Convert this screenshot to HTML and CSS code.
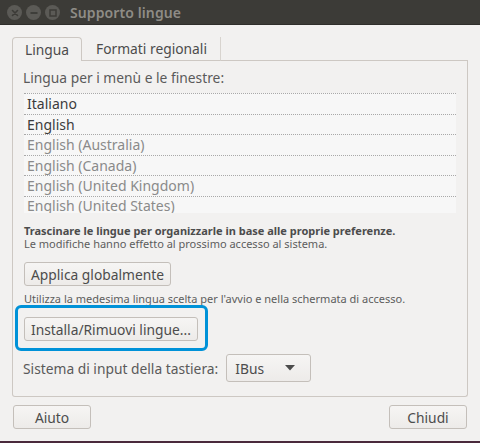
FILE: index.html
```html
<!DOCTYPE html>
<html lang="it">
<head>
<meta charset="utf-8">
<title>Supporto lingue</title>
<link rel="stylesheet" href="styles.css">
</head>
<body>
<div class="window">
  <header class="titlebar">
    <div class="wm-buttons">
      <span class="wm-btn">
        <svg viewBox="0 0 14 14" width="14" height="14"><path d="M4.5 4.5 L9.5 9.5 M9.5 4.5 L4.5 9.5" stroke="#3c3b37" stroke-width="1.6" stroke-linecap="round"/></svg>
      </span>
      <span class="wm-btn">
        <svg viewBox="0 0 14 14" width="14" height="14"><path d="M3.5 7 H10.5" stroke="#3c3b37" stroke-width="1.8"/></svg>
      </span>
      <span class="wm-btn">
        <svg viewBox="0 0 14 14" width="14" height="14"><rect x="4" y="4" width="6" height="6" fill="none" stroke="#3c3b37" stroke-width="1.5"/></svg>
      </span>
    </div>
    <div class="title">Supporto lingue</div>
  </header>

  <main class="content">
    <div class="tabs">
      <div class="tab active">Lingua</div>
      <div class="tab">Formati regionali</div>
      <div class="tab-fill"></div>
    </div>
    <section class="panel">
      <div class="label">Lingua per i menù e le finestre:</div>
      <div class="list">
        <div class="row strong">Italiano</div>
        <div class="row strong">English</div>
        <div class="row">English (Australia)</div>
        <div class="row">English (Canada)</div>
        <div class="row">English (United Kingdom)</div>
        <div class="row">English (United States)</div>
      </div>
      <div class="note">
        <div class="bold">Trascinare le lingue per organizzarle in base alle proprie preferenze.</div>
        <div>Le modifiche hanno effetto al prossimo accesso al sistema.</div>
      </div>
      <div class="btn-row first"><button class="btn">Applica globalmente</button></div>
      <div class="note single">Utilizza la medesima lingua scelta per l'avvio e nella schermata di accesso.</div>
      <div class="btn-row second">
        <span class="highlight-wrap">
          <button class="btn">Installa/Rimuovi lingue...</button>
          <span class="highlight"></span>
        </span>
      </div>
      <div class="input-row">
        <span class="label2">Sistema di input della tastiera:</span>
        <div class="combo">
          <span>IBus</span>
          <svg viewBox="0 0 10 6" width="10" height="6"><path d="M0 0 H10 L5 5.5 Z" fill="#4c4c4c"/></svg>
        </div>
      </div>
    </section>
    <footer class="actions">
      <button class="btn action">Aiuto</button>
      <button class="btn action">Chiudi</button>
    </footer>
  </main>
  <div class="bottom-edge"></div>
</div>
</body>
</html>
```

FILE: styles.css
```css
* { box-sizing: border-box; }
html, body {
  margin: 0;
  padding: 0;
}
body {
  width: 480px;
  height: 443px;
  overflow: hidden;
  background: #f2f1f0;
  font-family: "Noto Sans", "DejaVu Sans", sans-serif;
  color: #4c4c4c;
}
.window {
  width: 480px;
  height: 443px;
  display: flex;
  flex-direction: column;
}
.titlebar {
  height: 25px;
  flex: none;
  background: #3c3b37;
  border-bottom: 1px solid #2f2e2b;
  display: flex;
  align-items: center;
  padding-left: 7px;
}
.wm-buttons {
  display: flex;
  gap: 4px;
  margin-top: 1px;
}
.wm-btn {
  width: 15px;
  height: 15px;
  border-radius: 50%;
  background: #5b5a56;
  display: flex;
  align-items: center;
  justify-content: center;
}
.wm-btn svg { display: block; }
.title {
  margin-left: 10px;
  font-size: 14px;
  font-weight: 600;
  color: #8f8c86;
  letter-spacing: 0.1px;
  white-space: nowrap;
}
.content {
  flex: 1;
  padding: 12px 12px 0 12px;
  display: flex;
  flex-direction: column;
}
.tabs {
  display: flex;
  height: 24px;
  align-items: stretch;
}
.tab {
  font-size: 13.8px;
  color: #4c4c4c;
  display: flex;
  align-items: center;
  white-space: nowrap;
  flex: none;
  padding: 0 13px 0 14px;
  border-bottom: 1px solid #cdc8c3;
  border-right: 1px solid #d8d4cf;
}
.tab.active {
  border: 1px solid #cdc8c3;
  border-bottom: none;
  border-radius: 4px 4px 0 0;
  background: #f2f1f0;
  width: 70px;
  padding: 0 0 0 12px;
}
.tab-fill {
  flex: 1;
  border-bottom: 1px solid #cdc8c3;
}
.panel {
  height: 336px;
  border: 1px solid #cdc8c3;
  border-top: none;
  border-radius: 0 0 3px 3px;
  padding: 7px 11px 0 11px;
  display: flex;
  flex-direction: column;
}
.label {
  font-size: 13.8px;
  line-height: 19px;
  height: 19px;
  color: #5a5a5a;
  margin-left: -1px;
  margin-bottom: 6px;
  white-space: nowrap;
}
.list {
  height: 120px;
  overflow: hidden;
  background: #f7f7f7;
  flex: none;
}
.row {
  height: 20.5px;
  line-height: 19px;
  border-top: 1px dotted #a9a9a9;
  padding-left: 3px;
  font-size: 14px;
  color: #8a8a8a;
  white-space: nowrap;
}
.row:last-child {
  line-height: 17px;
}
.row.strong {
  color: #3c3c3c;
}
.note {
  margin-top: 11px;
  font-size: 11px;
  line-height: 13px;
  color: #5d5d5d;
  white-space: nowrap;
}
.note .bold {
  font-weight: 700;
  color: #4c4c4c;
}
.note.single {
  margin-top: 6px;
}
.btn-row {
  display: flex;
}
.btn-row.first { margin-top: 12px; }
.btn-row.second { margin-top: 12px; }
.btn {
  font-family: inherit;
  font-size: 13.8px;
  color: #4c4c4c;
  height: 24px;
  padding: 0 6px;
  border: 1px solid #c4bfba;
  border-radius: 3px;
  background: linear-gradient(#f6f5f4, #edebe9);
  display: flex;
  align-items: center;
  justify-content: center;
  margin: 0;
  white-space: nowrap;
}
.highlight-wrap {
  position: relative;
  display: flex;
}
.highlight {
  position: absolute;
  top: -12px;
  bottom: -10px;
  left: -9px;
  right: -10px;
  border: 3px solid #0092d8;
  border-radius: 6px;
  pointer-events: none;
}
.input-row {
  margin-top: 13px;
  display: flex;
  align-items: center;
  gap: 8px;
}
.label2 {
  font-size: 13.8px;
  color: #5a5a5a;
  margin-left: -1px;
  white-space: nowrap;
}
.combo {
  width: 85px;
  height: 28px;
  border: 1px solid #c4bfba;
  border-radius: 3px;
  background: linear-gradient(#f6f5f4, #edebe9);
  display: flex;
  align-items: center;
  justify-content: space-between;
  padding: 0 15px 0 8px;
  font-size: 13.8px;
  color: #4c4c4c;
}
.combo svg { display: block; }
.actions {
  margin-top: 8px;
  display: flex;
  justify-content: space-between;
  padding-left: 1px;
  padding-right: 1px;
}
.btn.action {
  width: 78px;
  height: 24px;
}
.bottom-edge {
  height: 2px;
  background: #4a2a3c;
  flex: none;
}
```
